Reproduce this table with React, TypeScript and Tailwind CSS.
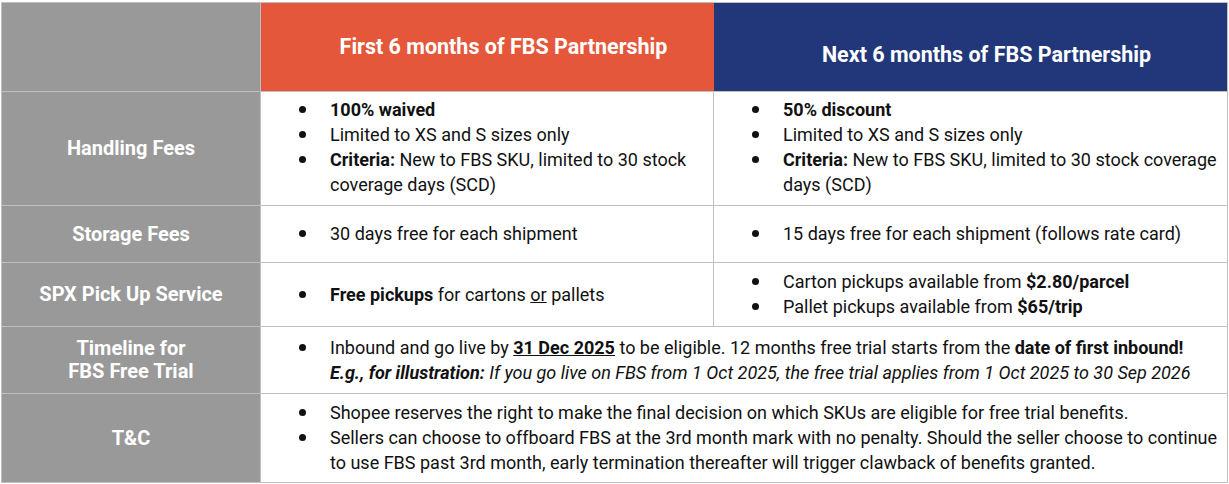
import React from "react";

const Dot = () => (
  <span className="mt-[9px] mr-[24px] h-[7px] w-[7px] shrink-0 rounded-full bg-[#111]" />
);

function Li({ children }: { children: React.ReactNode }) {
  return (
    <li className="flex items-start">
      <Dot />
      <span>{children}</span>
    </li>
  );
}

const Label = ({ children }: { children: React.ReactNode }) => (
  <div className="flex items-center justify-center bg-[#999999] text-center text-[20px] font-bold leading-[23px] text-white">
    {children}
  </div>
);

const Cell = ({ children, className = "" }: { children: React.ReactNode; className?: string }) => (
  <div className={`flex items-center bg-white pl-[38px] pr-[6px] text-[18px] leading-[25px] text-[#111] ${className}`}>
    <ul>{children}</ul>
  </div>
);

export default function App() {
  return (
    <div className="bg-white pl-[1px] pt-[2px]" style={{ fontFamily: "Roboto, 'Liberation Sans', sans-serif" }}>
      <div className="grid w-[1227px] grid-cols-[258px_452px_513px] grid-rows-[88px_113px_56px_63px_66px_88px] gap-px border border-[#bfbfbf] bg-[#bfbfbf]">
        <div className="bg-[#999999]" />
        <div className="flex items-center justify-center bg-[#e5573a] pl-[33px] text-[21.5px] font-bold text-white shadow-[1px_0_0_#e5573a]">
          First 6 months of FBS Partnership
        </div>
        <div className="flex items-center justify-center bg-[#21377a] pl-[32px] pt-[16px] text-[21.5px] font-bold text-white">
          Next 6 months of FBS Partnership
        </div>

        <Label>Handling Fees</Label>
        <Cell className="pb-[4px]">
          <Li><b>100% waived</b></Li>
          <Li>Limited to XS and S sizes only</Li>
          <Li><b>Criteria:</b> New to FBS SKU, limited to 30 stock coverage days (SCD)</Li>
        </Cell>
        <Cell className="pb-[4px]">
          <Li><b>50% discount</b></Li>
          <Li>Limited to XS and S sizes only</Li>
          <Li><b>Criteria:</b> New to FBS SKU, limited to 30 stock coverage days (SCD)</Li>
        </Cell>

        <Label>Storage Fees</Label>
        <Cell className="pb-[2px]">
          <Li>30 days free for each shipment</Li>
        </Cell>
        <Cell className="pb-[2px]">
          <Li>15 days free for each shipment (follows rate card)</Li>
        </Cell>

        <Label>SPX Pick Up Service</Label>
        <Cell>
          <Li><b>Free pickups</b> for cartons <u>or</u> pallets</Li>
        </Cell>
        <Cell className="pb-[2px]">
          <Li>Carton pickups available from <b>$2.80/parcel</b></Li>
          <Li>Pallet pickups available from <b>$65/trip</b></Li>
        </Cell>

        <Label>Timeline for<br />FBS Free Trial</Label>
        <Cell className="col-span-2 pb-[1px] leading-[23px]">
          <Li>
            Inbound and go live by <b><u>31 Dec 2025</u></b> to be eligible. 12 months free trial starts from the <b>date of first inbound!</b>
            <br />
            <i><b>E.g., for illustration:</b> If you go live on FBS from 1 Oct 2025, the free trial applies from 1 Oct 2025 to 30 Sep 2026</i>
          </Li>
        </Cell>

        <Label>T&amp;C</Label>
        <Cell className="col-span-2 pb-[2px] leading-[24.5px]">
          <Li>Shopee reserves the right to make the final decision on which SKUs are eligible for free trial benefits.</Li>
          <Li>Sellers can choose to offboard FBS at the 3rd month mark with no penalty. Should the seller choose to continue to use FBS past 3rd month, early termination thereafter will trigger clawback of benefits granted.</Li>
        </Cell>
      </div>
    </div>
  );
}
